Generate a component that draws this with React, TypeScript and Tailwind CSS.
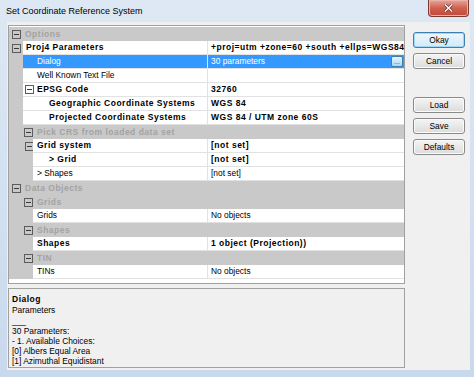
import type { ReactNode } from 'react'

function Minus({ className = '' }: { className?: string }) {
  return (
    <span className={`flex h-[9px] w-[9px] shrink-0 items-center justify-center border border-[#5c5c5c] ${className}`}>
      <span className="h-px w-[5px] bg-[#3a3a3a]" />
    </span>
  )
}

function Cat({ label, pad }: { label: string; pad: string }) {
  return (
    <div className={`flex h-[14px] items-center bg-[#c9c9c9] ${pad}`}>
      <Minus />
      <span className="ml-[4px] text-[8.5px] font-bold tracking-[0.5px] text-[#a3a3a3]">{label}</span>
    </div>
  )
}

type PropRowProps = {
  margin: string
  marginBox?: string
  inlineBox?: boolean
  pad: string
  label: string
  value?: string
  bold?: boolean
  sel?: boolean
  more?: boolean
}

function PropRow({ margin, marginBox, inlineBox, pad, label, value, bold, sel, more }: PropRowProps) {
  const txt = bold ? 'text-[8.5px] font-bold tracking-[0.5px]' : 'text-[8.4px]'
  const bg = sel ? 'bg-[#3399ff] text-white' : 'bg-white text-black'
  return (
    <div className="flex h-[14px]">
      <div className={`flex h-full shrink-0 items-center bg-[#c9c9c9] ${margin}`}>
        {marginBox && <Minus className={marginBox} />}
      </div>
      <div className={`flex h-full min-w-0 flex-1 items-center border-b border-[#e2e2e2] ${pad} ${bg}`}>
        {inlineBox && <Minus className="mr-[3px]" />}
        <span className={`whitespace-nowrap ${txt}`}>{label}</span>
      </div>
      <div className={`flex h-full w-[197px] shrink-0 items-center justify-between overflow-hidden border-b border-l border-[#e2e2e2] pl-[3px] ${bg}`}>
        <span className={`whitespace-nowrap ${txt}`}>{value}</span>
        {more && (
          <span className="mr-[1px] flex h-[11px] w-[12px] shrink-0 items-end justify-center rounded-[2px] border border-[#3c7fb1] bg-gradient-to-b from-[#e6f4fc] to-[#a9d8f5] pb-[1px] text-[7px] leading-none text-[#2a4a6a]">
            ...
          </span>
        )}
      </div>
    </div>
  )
}

function Btn({ children, primary }: { children: ReactNode; primary?: boolean }) {
  return (
    <div
      className={`flex h-[16px] w-[52px] items-center justify-center rounded-[3px] border text-[8.4px] text-black ${
        primary
          ? 'border-[#3c7fb1] bg-gradient-to-b from-[#eef7fd] to-[#d3e9f8] shadow-[inset_0_0_0_1px_#9fd8f8]'
          : 'border-[#8a8a8a] bg-gradient-to-b from-[#f4f4f4] to-[#dcdcdc] shadow-[inset_0_0_0_1px_#fbfbfb]'
      }`}
    >
      {children}
    </div>
  )
}

export default function App() {
  return (
    <div className="h-[377px] w-[474px] overflow-hidden bg-gradient-to-b from-[#dde8f4] to-[#c9d9ec] font-['Liberation_Sans',Arial,sans-serif]">
      {/* title bar */}
      <div className="flex h-[22px] items-start justify-between">
        <span className="ml-[6px] mt-[5px] text-[9px] leading-[12px] text-black">Set Coordinate Reference System</span>
        <div className="mr-[5px] flex h-[17px] w-[41px] items-center justify-center rounded-b-[4px] border border-t-0 border-[#7d3a33] bg-gradient-to-b from-[#e8a69c] via-[#d0604f] to-[#c3463a] shadow-[inset_0_0_0_1px_#eab3aa]">
          <svg width="9" height="8" viewBox="0 0 9 8">
            <path d="M1 0.5 L8 7.5 M8 0.5 L1 7.5" stroke="#5a1f1a" strokeWidth="2.6" />
            <path d="M1 0.5 L8 7.5 M8 0.5 L1 7.5" stroke="#ffffff" strokeWidth="1.5" />
          </svg>
        </div>
      </div>

      {/* client area */}
      <div className="ml-[7px] flex h-[348px] w-[463px] bg-[#f0f0f0]">
        <div className="ml-[1px] mt-[3px] flex w-[397px] flex-col">
          {/* property grid */}
          <div className="h-[259px] overflow-hidden border border-[#a0a0a0] bg-white pt-[1px]">
            <Cat label="Options" pad="pl-[3px]" />
            <PropRow margin="w-[14px]" marginBox="ml-[3px]" pad="pl-[3px]" label="Proj4 Parameters" bold value="+proj=utm +zone=60 +south +ellps=WGS84 +datum=WGS84 +units=m +no_defs" />
            <PropRow margin="w-[14px]" pad="pl-[14px]" label="Dialog" value="30 parameters" sel more />
            <PropRow margin="w-[14px]" pad="pl-[14px]" label="Well Known Text File" value="" />
            <PropRow margin="w-[14px]" inlineBox pad="pl-[2px]" label="EPSG Code" bold value="32760" />
            <PropRow margin="w-[14px]" pad="pl-[26px]" label="Geographic Coordinate Systems" bold value="WGS 84" />
            <PropRow margin="w-[14px]" pad="pl-[26px]" label="Projected Coordinate Systems" bold value="WGS 84 / UTM zone 60S" />
            <Cat label="Pick CRS from loaded data set" pad="pl-[15px]" />
            <PropRow margin="w-[24px]" marginBox="ml-[16px]" pad="pl-[4px]" label="Grid system" bold value="[not set]" />
            <PropRow margin="w-[24px]" pad="pl-[16px]" label="> Grid" bold value="[not set]" />
            <PropRow margin="w-[24px]" pad="pl-[4px]" label="> Shapes" value="[not set]" />
            <Cat label="Data Objects" pad="pl-[3px]" />
            <Cat label="Grids" pad="pl-[15px]" />
            <PropRow margin="w-[24px]" pad="pl-[4px]" label="Grids" value="No objects" />
            <Cat label="Shapes" pad="pl-[15px]" />
            <PropRow margin="w-[24px]" pad="pl-[4px]" label="Shapes" bold value="1 object (Projection))" />
            <Cat label="TIN" pad="pl-[15px]" />
            <PropRow margin="w-[24px]" pad="pl-[4px]" label="TINs" value="No objects" />
          </div>

          {/* description */}
          <div className="mt-[4px] h-[80px] overflow-hidden border border-[#a0a0a0] bg-[#f0f0f0] pl-[3px] pt-[4px] text-black">
            <div className="text-[8.5px] font-bold leading-[12px] tracking-[0.5px]">Dialog</div>
            <div className="text-[8.4px] leading-[11px]">Parameters</div>
            <div className="text-[8.4px] leading-[10px]">___</div>
            <div className="text-[8.4px] leading-[10px]">30 Parameters:</div>
            <div className="text-[8.4px] leading-[10px]">- 1. Available Choices:</div>
            <div className="text-[8.4px] leading-[10px]">[0] Albers Equal Area</div>
            <div className="text-[8.4px] leading-[10px]">[1] Azimuthal Equidistant</div>
          </div>
        </div>

        {/* buttons */}
        <div className="ml-[8px] mt-[10px] flex flex-col">
          <Btn primary>Okay</Btn>
          <div className="mt-[5px]">
            <Btn>Cancel</Btn>
          </div>
          <div className="mt-[28px] flex flex-col gap-[5px]">
            <Btn>Load</Btn>
            <Btn>Save</Btn>
            <Btn>Defaults</Btn>
          </div>
        </div>
      </div>
    </div>
  )
}
